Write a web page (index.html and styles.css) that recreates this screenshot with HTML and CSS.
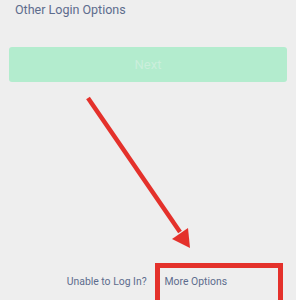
FILE: index.html
```html
<!doctype html>
<html>
    <head>
        <meta charset="utf-8">
        <link rel="stylesheet" href="styles.css">
    </head>
    <body>
        <div class="login-page">

            <a class="other-options" href="#">Other Login Options</a>

            <button type="button" class="btn-next" disabled>Next</button>

            <div class="login-footer">
                <a class="footer-link" href="#">Unable to Log In?</a>
                <a class="footer-link more-options" href="#">More Options</a>
            </div>

            <!-- annotation drawn over the screen -->
            <svg class="annotation" width="296" height="300" viewBox="0 0 296 300">
                <line x1="88" y1="98" x2="180" y2="232" stroke="#e4312b" stroke-width="4.5"/>
                <polygon points="190,248 172,239 188,228" fill="#e4312b"/>
                <rect x="157.5" y="265.5" width="123" height="37" fill="none" stroke="#e4312b" stroke-width="5"/>
            </svg>

        </div>
    </body>
</html>
```

FILE: styles.css
```css
html,
body {
    margin: 0;
    background: #eeeeee;
}

body {
    font-family: Roboto, "Liberation Sans", sans-serif;
}

.login-page {
    position: relative;
    height: 300px;
    display: flex;
    flex-direction: column;
    overflow: hidden;
}

.other-options {
    display: block;
    padding: 2px 15px 0;
    font-size: 12.5px;
    line-height: 16px;
    color: #5d6c8d;
    text-decoration: none;
}

.btn-next {
    margin: 29px 9px 0;
    height: 35px;
    border: 0;
    border-radius: 3px;
    background: #b3ecce;
    color: #cbefdc;
    font-family: inherit;
    font-size: 13px;
}

.login-footer {
    margin-top: auto;
    display: flex;
    justify-content: flex-end;
    gap: 18px;
    padding: 0 69px 11px 0;
}

.footer-link {
    font-size: 10.4px;
    line-height: 14px;
    color: #5d6c8d;
    text-decoration: none;
}

.annotation {
    position: absolute;
    left: 0;
    top: 0;
    pointer-events: none;
}
```
